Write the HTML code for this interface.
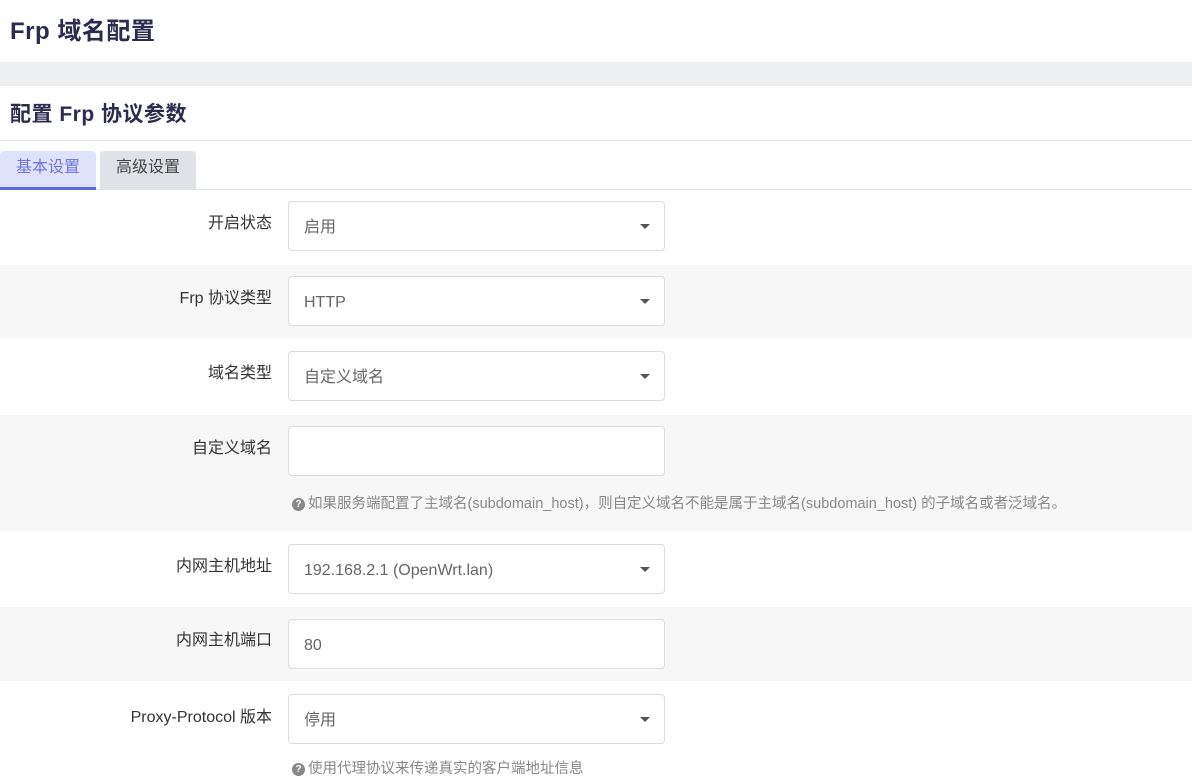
<!DOCTYPE html>
<html><head><meta charset="utf-8"><style>
*{margin:0;padding:0;box-sizing:border-box}
body{width:1192px;height:764px;overflow:hidden;background:#fff;font-family:"Liberation Sans","Noto Sans CJK SC",sans-serif;color:#333}
.h1{height:62px;padding:11px 10px;font-size:24px;font-weight:bold;color:#2c2c4e;letter-spacing:0.5px}
.band{height:24px;background:#eeeff1}
.h2{height:55px;padding:12px 10px;font-size:21px;font-weight:bold;color:#2c2c4e;border-bottom:1px solid #e2e2e2;letter-spacing:0.5px}
.tabs{height:49px;padding-top:10px;border-bottom:1px solid #e2e2e2;position:relative}
.tab{position:absolute;top:10px;height:39px;width:96px;border-radius:4px 4px 0 0;font-size:16px;text-align:center;line-height:34px}
.t1{left:0;background:#dfe2fb;color:#6b75e0;border-bottom:3px solid #5e6ae3}
.t2{left:100px;background:#dfe3e8;color:#444}
.row{position:relative}
.g{background:#f7f7f8}
.lab{position:absolute;right:920px;font-size:16px;color:#333;white-space:nowrap}
.in{position:absolute;left:288px;width:377px;height:50px;border:1px solid #dcdcdc;border-radius:4px;background:#fff;font-size:16px;color:#666;padding-left:15px;line-height:52px}
.in.s::after{content:"";position:absolute;right:14px;top:22px;border-left:5px solid transparent;border-right:5px solid transparent;border-top:5px solid #555}
.help{position:absolute;left:292px;font-size:14.5px;color:#888;white-space:nowrap}
.q{display:inline-block;width:13px;height:13px;border-radius:50%;background:#888;color:#fff;font-size:10px;text-align:center;line-height:13px;font-weight:bold;vertical-align:1px;margin-right:3px}
</style></head><body>
<div class="h1">Frp 域名配置</div>
<div class="band"></div>
<div class="h2">配置 Frp 协议参数</div>
<div class="tabs"><div class="tab t1">基本设置</div><div class="tab t2">高级设置</div></div>
<div class="row" style="height:75px"><div class="lab" style="top:19px">开启状态</div><div class="in s" style="top:11px">启用</div></div>
<div class="row g" style="height:73px"><div class="lab" style="top:19px">Frp 协议类型</div><div class="in s" style="top:11px">HTTP</div></div>
<div class="row" style="height:77px"><div class="lab" style="top:21px">域名类型</div><div class="in s" style="top:13px">自定义域名</div></div>
<div class="row g" style="height:116px"><div class="lab" style="top:19px">自定义域名</div><div class="in" style="top:11px"></div><div class="help" style="top:77px"><span class="q">?</span>如果服务端配置了主域名(subdomain_host)，则自定义域名不能是属于主域名(subdomain_host) 的子域名或者泛域名。</div></div>
<div class="row" style="height:76px"><div class="lab" style="top:21px">内网主机地址</div><div class="in s" style="top:13px">192.168.2.1 (OpenWrt.lan)</div></div>
<div class="row g" style="height:74px"><div class="lab" style="top:19px">内网主机端口</div><div class="in" style="top:12px">80</div></div>
<div class="row" style="height:90px"><div class="lab" style="top:22px">Proxy-Protocol 版本</div><div class="in s" style="top:13px">停用</div><div class="help" style="top:76px"><span class="q">?</span>使用代理协议来传递真实的客户端地址信息</div></div>
</body></html>
